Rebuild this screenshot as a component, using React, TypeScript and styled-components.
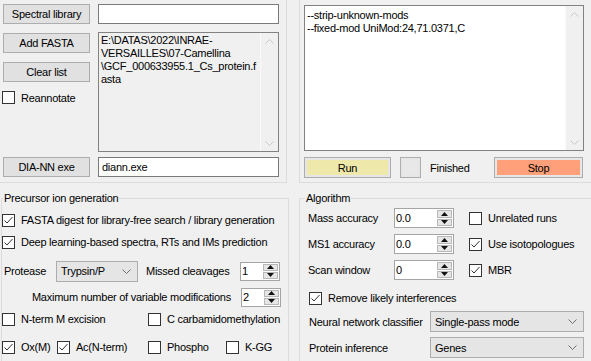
import React from "react";
import styled, { createGlobalStyle } from "styled-components";

const GlobalStyle = createGlobalStyle`
  html, body { margin: 0; padding: 0; background: #f0f0f0; }
  body {
    font-family: "Liberation Sans", Arial, sans-serif;
    font-size: 11px;
    letter-spacing: -0.25px;
    color: #000;
  }
`;

const Form = styled.div`
  width: 591px;
  height: 361px;
  overflow: hidden;
  background: #f0f0f0;
`;

const TopRow = styled.div`
  display: flex;
  height: 183px;
`;

const FilesPanel = styled.div`
  box-sizing: border-box;
  flex: 0 0 287px;
  height: 183px;
  border-right: 1px solid #dcdcdc;
  border-bottom: 1px solid #dcdcdc;
  padding: 4px 0 0 3px;
  display: flex;
  flex-direction: column;
`;

const ScriptPanel = styled.div`
  box-sizing: border-box;
  flex: 0 0 300px;
  margin-left: 12px;
  height: 183px;
  border-left: 1px solid #dcdcdc;
  border-bottom: 1px solid #dcdcdc;
  padding: 5px 0 0 4px;
  display: flex;
  flex-direction: column;
`;

const Row = styled.div<{ $top?: number; $gap?: number }>`
  display: flex;
  align-items: flex-start;
  gap: ${(p) => p.$gap ?? 8}px;
  margin-top: ${(p) => p.$top ?? 0}px;
`;

const ButtonStack = styled.div`
  display: flex;
  flex-direction: column;
  gap: 9px;
  padding-top: 1px;
`;

const Button = styled.div<{ $w?: number; $h?: number; $bg?: string }>`
  box-sizing: border-box;
  width: ${(p) => p.$w ?? 87}px;
  height: ${(p) => p.$h ?? 20}px;
  flex-shrink: 0;
  border: 1px solid #adadad;
  background: ${(p) => p.$bg ?? "#e1e1e1"};
  box-shadow: ${(p) => (p.$bg ? "inset 0 0 0 2px #e6e6e6" : "none")};
  display: flex;
  align-items: center;
  justify-content: center;
`;

const TextBox = styled.div`
  box-sizing: border-box;
  width: 181px;
  height: 20px;
  border: 1px solid #7a7a7a;
  background: #fff;
  padding-left: 3px;
  display: flex;
  align-items: center;
`;

const ListBox = styled.div`
  box-sizing: border-box;
  width: 181px;
  height: 120px;
  border: 1px solid #828282;
  background: #f0f0f0;
  display: flex;
`;

const ListText = styled.div`
  flex: 1;
  padding: 1px 0 0 2px;
  line-height: 13px;
  white-space: nowrap;
  overflow: hidden;
`;

const ScrollBar = styled.div`
  width: 17px;
  border-left: 1px solid #fafafa;
  background: #f0f0f0;
  display: flex;
  flex-direction: column;
  justify-content: space-between;
  align-items: center;
  padding: 6px 0 5px;
`;

const ScriptBox = styled.div`
  box-sizing: border-box;
  width: 280px;
  height: 146px;
  border: 1px solid #828282;
  background: #fff;
  display: flex;
`;

const ScriptText = styled.div`
  flex: 1;
  padding: 3px 0 0 2px;
  line-height: 13px;
  white-space: nowrap;
`;

const ActionRow = styled.div`
  display: flex;
  align-items: center;
  width: 279px;
  margin-top: 6px;
  height: 21px;
`;

const Caption = styled.span<{ $left?: number }>`
  margin-left: ${(p) => p.$left ?? 0}px;
  white-space: nowrap;
`;

const Push = styled.div`
  margin-left: auto;
`;

const BottomRow = styled.div`
  display: flex;
  margin-top: 9px;
`;

const Group = styled.fieldset<{ $left: number; $w: number }>`
  box-sizing: border-box;
  margin: 0 0 0 ${(p) => p.$left}px;
  padding: 0;
  width: ${(p) => p.$w}px;
  flex-shrink: 0;
  height: 190px;
  border: 1px solid #dcdcdc;
  min-width: 0;
`;

const Legend = styled.legend<{ $indent: number }>`
  margin-left: ${(p) => p.$indent}px;
  padding: 0 1px;
  line-height: 13px;
  font-size: 11px;
`;

const Line = styled.div<{ $h?: number; $top?: number; $cols?: string; $pad?: number; $end?: boolean }>`
  display: grid;
  grid-template-columns: ${(p) => p.$cols ?? "auto"};
  justify-content: ${(p) => (p.$end ? "end" : "start")};
  align-items: center;
  height: ${(p) => p.$h ?? 22}px;
  margin-top: ${(p) => p.$top ?? 0}px;
  padding-left: ${(p) => p.$pad ?? 0}px;
  padding-right: ${(p) => (p.$end ? 7 : 0)}px;
`;

const Item = styled.div<{ $gap?: number }>`
  display: flex;
  align-items: center;
  gap: ${(p) => p.$gap ?? 0}px;
  white-space: nowrap;
`;

const CheckRow = styled.label`
  display: flex;
  align-items: center;
  gap: 6px;
  white-space: nowrap;
`;

const Box = styled.span`
  box-sizing: border-box;
  width: 13px;
  height: 13px;
  border: 1px solid #333;
  background: #fff;
  display: inline-flex;
  align-items: center;
  justify-content: center;
  flex-shrink: 0;
`;

const Select = styled.div<{ $w: number }>`
  box-sizing: border-box;
  width: ${(p) => p.$w}px;
  height: 21px;
  border: 1px solid #adadad;
  background: #e5e5e5;
  display: flex;
  align-items: center;
  justify-content: space-between;
  padding: 0 6px 0 4px;
`;

const Spin = styled.div<{ $w: number; $h?: number }>`
  box-sizing: border-box;
  width: ${(p) => p.$w}px;
  height: ${(p) => p.$h ?? 19}px;
  border: 1px solid #a5a5a5;
  background: #fff;
  display: flex;
  align-items: stretch;
  padding: 1px 1px 1px 0;
`;

const SpinValue = styled.span`
  flex: 1;
  display: flex;
  align-items: center;
  padding-left: 1px;
`;

const SpinButtons = styled.div`
  width: 15px;
  display: flex;
  flex-direction: column;
  gap: 1px;
`;

const SpinArrow = styled.div`
  flex: 1;
  box-sizing: border-box;
  border: 1px solid #b8b8b8;
  background: #e6e6e6;
  display: flex;
  align-items: center;
  justify-content: center;
`;

const AlgoGrid = styled.div`
  display: grid;
  grid-template-columns: 86px 75px auto;
  grid-auto-rows: 26px;
  align-items: center;
  padding-left: 8px;
`;

const Chevron = ({ up, color = "#c8c8c8" }: { up?: boolean; color?: string }) => (
  <svg width="9" height="5" viewBox="0 0 9 5">
    <path
      d={up ? "M0.5 4.5 L4.5 0.5 L8.5 4.5" : "M0.5 0.5 L4.5 4.5 L8.5 0.5"}
      fill="none"
      stroke={color}
      strokeWidth="1"
    />
  </svg>
);

const Triangle = ({ up }: { up?: boolean }) => (
  <svg width="7" height="4" viewBox="0 0 7 4">
    <path d={up ? "M0 4 L3.5 0 L7 4 Z" : "M0 0 L3.5 4 L7 0 Z"} fill="#111" />
  </svg>
);

const Check = ({ on, label }: { on?: boolean; label: string }) => (
  <CheckRow>
    <Box>
      {on && (
        <svg width="11" height="11" viewBox="0 0 11 11">
          <path d="M1.5 5.5 L4 8 L9.5 2" fill="none" stroke="#333" strokeWidth="1" />
        </svg>
      )}
    </Box>
    <span>{label}</span>
  </CheckRow>
);

const Spinner = ({ value, w, h }: { value: string; w: number; h?: number }) => (
  <Spin $w={w} $h={h}>
    <SpinValue>{value}</SpinValue>
    <SpinButtons>
      <SpinArrow>
        <Triangle up />
      </SpinArrow>
      <SpinArrow>
        <Triangle />
      </SpinArrow>
    </SpinButtons>
  </Spin>
);

const Combo = ({ value, w }: { value: string; w: number }) => (
  <Select $w={w}>
    <span>{value}</span>
    <Chevron color="#707070" />
  </Select>
);

export default function App() {
  return (
    <Form>
      <GlobalStyle />
      <TopRow>
        <FilesPanel>
          <Row>
            <Button>Spectral library</Button>
            <TextBox />
          </Row>
          <Row $top={8}>
            <ButtonStack>
              <Button>Add FASTA</Button>
              <Button>Clear list</Button>
              <Caption $left={-1}>
                <Check label="Reannotate" />
              </Caption>
            </ButtonStack>
            <ListBox>
              <ListText>
                <div>E:\DATAS\2022\INRAE-</div>
                <div>VERSAILLES\07-Camellina</div>
                <div>\GCF_000633955.1_Cs_protein.f</div>
                <div>asta</div>
              </ListText>
              <ScrollBar>
                <Chevron up />
                <Chevron />
              </ScrollBar>
            </ListBox>
          </Row>
          <Row $top={5}>
            <Button>DIA-NN exe</Button>
            <TextBox>diann.exe</TextBox>
          </Row>
        </FilesPanel>

        <ScriptPanel>
          <ScriptBox>
            <ScriptText>
              <div>--strip-unknown-mods</div>
              <div>--fixed-mod UniMod:24,71.0371,C</div>
            </ScriptText>
            <ScrollBar>
              <Chevron up />
              <Chevron />
            </ScrollBar>
          </ScriptBox>
          <ActionRow>
            <Button $h={21} $bg="#eee8aa">Run</Button>
            <Caption $left={9}>
              <Button $w={21} $h={21} $bg="#e8e8e8" />
            </Caption>
            <Caption $left={9}>Finished</Caption>
            <Push>
              <Button $w={89} $h={21} $bg="#ffa07a">Stop</Button>
            </Push>
          </ActionRow>
        </ScriptPanel>
      </TopRow>

      <BottomRow>
        <Group $left={1} $w={288}>
          <Legend $indent={1}>Precursor ion generation</Legend>
          <Line $top={4}>
            <Check on label="FASTA digest for library-free search / library generation" />
          </Line>
          <Line>
            <Check on label="Deep learning-based spectra, RTs and IMs prediction" />
          </Line>
          <Line $top={3} $h={30} $cols="52px 90px 94px auto" $pad={2}>
            <span>Protease</span>
            <Combo value="Trypsin/P" w={82} />
            <span>Missed cleavages</span>
            <Spinner value="1" w={40} />
          </Line>
          <Line $end>
            <Item $gap={10}>
              <span>Maximum number of variable modifications</span>
              <Spinner value="2" w={40} />
            </Item>
          </Line>
          <Line $cols="146px auto">
            <Check label="N-term M excision" />
            <Check label="C carbamidomethylation" />
          </Line>
          <Line $top={6} $cols="55px 91px 78px auto">
            <Check on label="Ox(M)" />
            <Check on label="Ac(N-term)" />
            <Check label="Phospho" />
            <Check label="K-GG" />
          </Line>
        </Group>

        <Group $left={10} $w={300}>
          <Legend $indent={5}>Algorithm</Legend>
          <AlgoGrid>
            <span>Mass accuracy</span>
            <Spinner value="0.0" w={60} h={20} />
            <Check label="Unrelated runs" />
            <span>MS1 accuracy</span>
            <Spinner value="0.0" w={60} h={20} />
            <Check on label="Use isotopologues" />
            <span>Scan window</span>
            <Spinner value="0" w={60} h={20} />
            <Check on label="MBR" />
          </AlgoGrid>
          <Line $top={2} $h={26} $pad={9}>
            <Check on label="Remove likely interferences" />
          </Line>
          <Line $h={21} $cols="121px auto" $pad={9}>
            <span>Neural network classifier</span>
            <Combo value="Single-pass mode" w={154} />
          </Line>
          <Line $top={5} $h={21} $cols="121px auto" $pad={9}>
            <span>Protein inference</span>
            <Combo value="Genes" w={154} />
          </Line>
        </Group>
      </BottomRow>
    </Form>
  );
}
